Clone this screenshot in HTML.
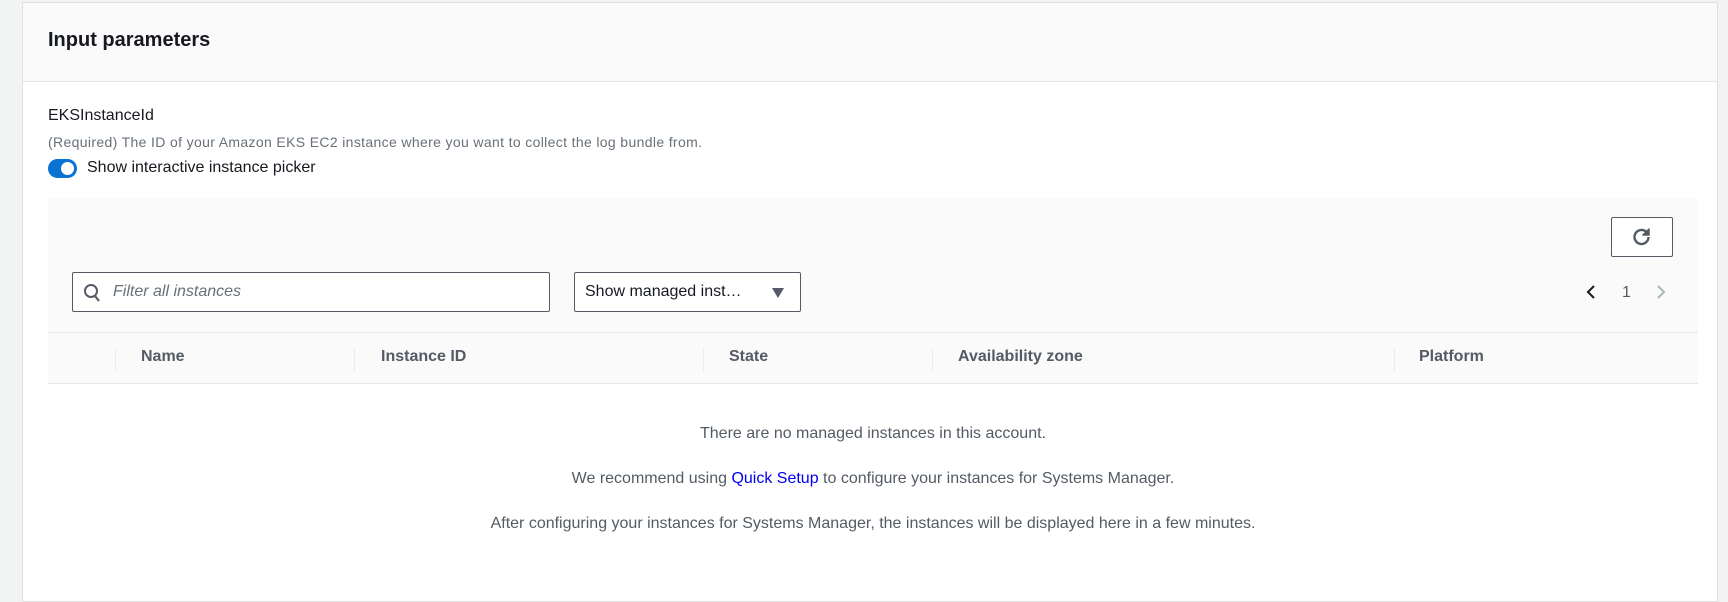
<!DOCTYPE html>
<html><head><meta charset="utf-8"><style>
*{box-sizing:border-box;margin:0;padding:0}
body{width:1728px;height:552px;background:#f2f3f3;font-family:"Liberation Sans",sans-serif;color:#16191f;position:relative;overflow:hidden}
.panel{position:absolute;left:22px;top:2px;width:1696px;height:600px;background:#fff;border:1px solid #e0e0e0}
.hdr{position:absolute;left:0;top:0;right:0;height:79px;background:#fafafa;border-bottom:1px solid #e6e6e6}
.abs{position:absolute;white-space:nowrap}
.gray{position:absolute;left:25px;top:195px;width:1650px;height:186px;background:#fafafa;border-bottom:1px solid #e6e6e6}
.th{position:absolute;top:345px;font-weight:bold;font-size:16px;color:#545b64}
.div{position:absolute;top:345px;width:1px;height:24px;background:#eaeded}
.msg{position:absolute;left:25px;width:1650px;text-align:center;font-size:16px;color:#545b64}
</style></head><body>
<div class="panel">
<div class="hdr"></div>
<div class="abs" style="left:25px;top:26px;font-size:20px;font-weight:bold">Input parameters</div>
<div class="abs" style="left:25px;top:104px;font-size:16px">EKSInstanceId</div>
<div class="abs" style="left:25px;top:131px;font-size:14px;letter-spacing:0.35px;color:#687078">(Required) The ID of your Amazon EKS EC2 instance where you want to collect the log bundle from.</div>
<div class="abs" style="left:25px;top:156px;width:29px;height:19px;border-radius:10px;background:#0972d3"><div style="position:absolute;right:3px;top:3px;width:13px;height:13px;border-radius:50%;background:#fff"></div></div>
<div class="abs" style="left:64px;top:156px;font-size:16px">Show interactive instance picker</div>
<div class="gray"></div>
<div class="abs" style="left:25px;top:329px;width:1650px;height:1px;background:#e6e6e6"></div>
<div class="abs" style="left:1588px;top:214px;width:62px;height:40px;border:1px solid #545b64;border-radius:2px;background:#fff">
<svg width="60" height="38" viewBox="0 0 60 38"><path d="M36.5 19a7 7 0 1 1-2.2-5.1" fill="none" stroke="#545b64" stroke-width="2.4"/><path d="M37 11v6h-6z" fill="#545b64" stroke="#545b64" stroke-width="1.5" stroke-linejoin="round"/></svg></div>
<div class="abs" style="left:49px;top:269px;width:478px;height:40px;border:1px solid #545b64;border-radius:2px;background:#fff">
<svg style="position:absolute;left:10px;top:10px" width="18" height="20" viewBox="0 0 18 20"><circle cx="8" cy="8" r="6" fill="none" stroke="#545b64" stroke-width="2"/><path d="M12 13l4 5" stroke="#545b64" stroke-width="2.2"/></svg>
<span class="abs" style="left:40px;top:10px;font-size:16px;font-style:italic;color:#687078">Filter all instances</span></div>
<div class="abs" style="left:551px;top:269px;width:227px;height:40px;border:1px solid #545b64;border-radius:2px;background:#fff">
<span class="abs" style="left:10px;top:10px;font-size:16px">Show managed inst…</span>
<svg style="position:absolute;left:196px;top:14px" width="14" height="12"><path d="M1 1h12l-6 10z" fill="#545b64"/></svg></div>
<svg class="abs" style="left:1562px;top:281px" width="12" height="16"><path d="M9 2L3 8l6 6" fill="none" stroke="#16191f" stroke-width="2"/></svg>
<div class="abs" style="left:1599px;top:281px;font-size:16px;color:#545b64">1</div>
<svg class="abs" style="left:1632px;top:281px" width="12" height="16"><path d="M3 2l6 6-6 6" fill="none" stroke="#aab7b8" stroke-width="2"/></svg>
<div class="div" style="left:92px"></div><div class="div" style="left:331px"></div><div class="div" style="left:680px"></div><div class="div" style="left:909px"></div><div class="div" style="left:1371px"></div>
<div class="th" style="left:118px">Name</div>
<div class="th" style="left:358px">Instance ID</div>
<div class="th" style="left:706px">State</div>
<div class="th" style="left:935px">Availability zone</div>
<div class="th" style="left:1396px">Platform</div>
<div class="msg" style="top:422px">There are no managed instances in this account.</div>
<div class="msg" style="top:467px">We recommend using <span style="color:#0000ee">Quick Setup</span> to configure your instances for Systems Manager.</div>
<div class="msg" style="top:512px">After configuring your instances for Systems Manager, the instances will be displayed here in a few minutes.</div>
</div>
</body></html>
